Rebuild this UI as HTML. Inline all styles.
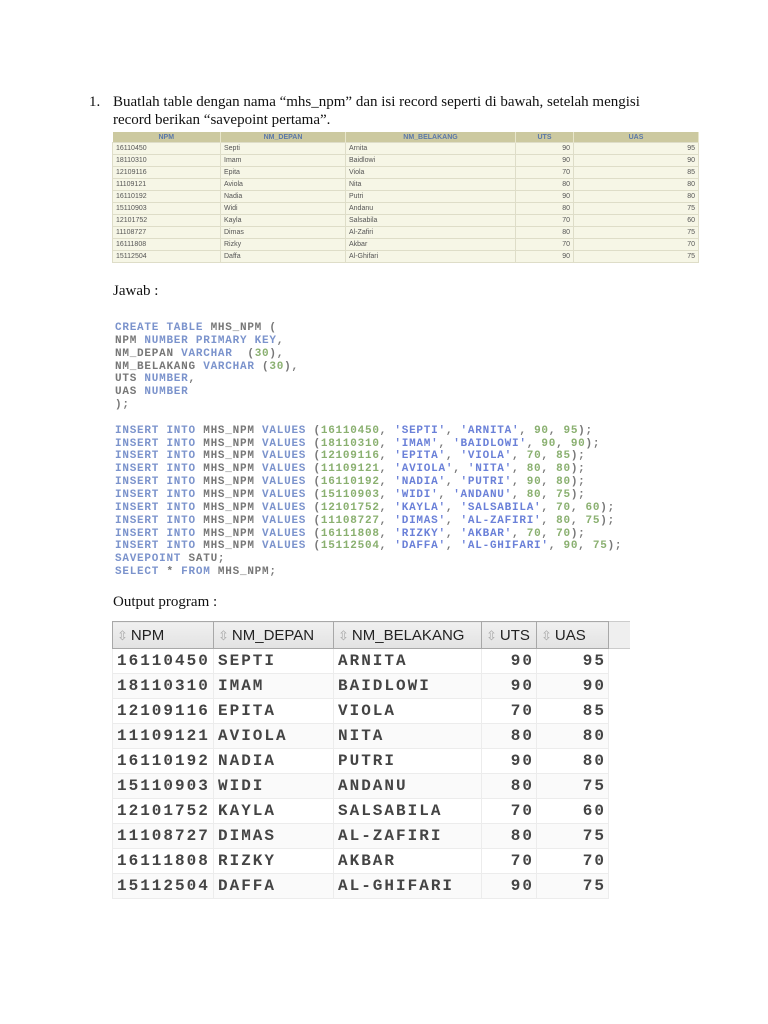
<!DOCTYPE html>
<html><head><meta charset="utf-8"><style>
body{margin:0;width:768px;height:1024px;background:#fff;position:relative;overflow:hidden;font-family:"Liberation Serif",serif;color:#111}
.t{position:absolute;font-size:15px;white-space:nowrap}
#t1{position:absolute;left:112px;top:132px;width:586px;border-collapse:collapse;font-family:"Liberation Sans",sans-serif;font-size:7px;color:#555;table-layout:fixed}
#t1 th{background:#ccc9a0;color:#5a78a8;height:10px;padding:0;font-weight:bold;border-right:1px solid #e8e6cc}
#t1 td{background:#f6f6e6;height:11px;padding:0 3px;border:1px solid #deddc8;line-height:10px}
#t1 td.r{text-align:right}
.code{position:absolute;left:115px;top:322px;font-family:"Liberation Mono",monospace;font-size:11px;letter-spacing:0.75px;line-height:12.85px;font-weight:bold;white-space:pre;color:#777}
.k{color:#7b93cc}.n{color:#8ab070}.s{color:#6a80d8}
#t2{position:absolute;left:112px;top:621px;border-collapse:collapse;table-layout:fixed}
#t2 th{height:26px;background:linear-gradient(#f0f0f0,#e2e2e2);border:1px solid #a8a8a8;font-family:"Liberation Sans",sans-serif;font-weight:normal;font-size:15px;color:#222;text-align:left;padding:0 4px;white-space:nowrap}
#t2 th span{color:#aaa;font-size:13px;margin-right:3px}
#t2 td{height:24px;border:1px solid #ececec;font-family:"Liberation Mono",monospace;font-size:16px;letter-spacing:2px;font-weight:bold;color:#444;padding:0 2px 0 4px;white-space:nowrap;overflow:hidden}
#t2 td.r{text-align:right}
#t2 tr.g td{background:#fafafa}
</style></head><body>
<div class="t" style="left:89px;top:94px">1.</div>
<div class="t" style="left:113px;top:94px">Buatlah table dengan nama “mhs_npm” dan isi record seperti di bawah, setelah mengisi</div>
<div class="t" style="left:113px;top:112px">record berikan “savepoint pertama”.</div>

<table id="t1">
<colgroup><col style="width:108px"><col style="width:125px"><col style="width:170px"><col style="width:58px"><col style="width:125px"></colgroup>
<tr><th>NPM</th><th>NM_DEPAN</th><th>NM_BELAKANG</th><th>UTS</th><th>UAS</th></tr>
<tr><td>16110450</td><td>Septi</td><td>Arnita</td><td class="r">90</td><td class="r">95</td></tr>
<tr><td>18110310</td><td>Imam</td><td>Baidlowi</td><td class="r">90</td><td class="r">90</td></tr>
<tr><td>12109116</td><td>Epita</td><td>Viola</td><td class="r">70</td><td class="r">85</td></tr>
<tr><td>11109121</td><td>Aviola</td><td>Nita</td><td class="r">80</td><td class="r">80</td></tr>
<tr><td>16110192</td><td>Nadia</td><td>Putri</td><td class="r">90</td><td class="r">80</td></tr>
<tr><td>15110903</td><td>Widi</td><td>Andanu</td><td class="r">80</td><td class="r">75</td></tr>
<tr><td>12101752</td><td>Kayla</td><td>Salsabila</td><td class="r">70</td><td class="r">60</td></tr>
<tr><td>11108727</td><td>Dimas</td><td>Al-Zafiri</td><td class="r">80</td><td class="r">75</td></tr>
<tr><td>16111808</td><td>Rizky</td><td>Akbar</td><td class="r">70</td><td class="r">70</td></tr>
<tr><td>15112504</td><td>Daffa</td><td>Al-Ghifari</td><td class="r">90</td><td class="r">75</td></tr>
</table>

<div class="t" style="left:113px;top:283px">Jawab :</div>

<div class="code"><span class="k">CREATE TABLE</span> MHS_NPM (
NPM <span class="k">NUMBER PRIMARY KEY</span>,
NM_DEPAN <span class="k">VARCHAR</span>  (<span class="n">30</span>),
NM_BELAKANG <span class="k">VARCHAR</span> (<span class="n">30</span>),
UTS <span class="k">NUMBER</span>,
UAS <span class="k">NUMBER</span>
);

<span class="k">INSERT INTO</span> MHS_NPM <span class="k">VALUES</span> (<span class="n">16110450</span>, <span class="s">'SEPTI'</span>, <span class="s">'ARNITA'</span>, <span class="n">90</span>, <span class="n">95</span>);
<span class="k">INSERT INTO</span> MHS_NPM <span class="k">VALUES</span> (<span class="n">18110310</span>, <span class="s">'IMAM'</span>, <span class="s">'BAIDLOWI'</span>, <span class="n">90</span>, <span class="n">90</span>);
<span class="k">INSERT INTO</span> MHS_NPM <span class="k">VALUES</span> (<span class="n">12109116</span>, <span class="s">'EPITA'</span>, <span class="s">'VIOLA'</span>, <span class="n">70</span>, <span class="n">85</span>);
<span class="k">INSERT INTO</span> MHS_NPM <span class="k">VALUES</span> (<span class="n">11109121</span>, <span class="s">'AVIOLA'</span>, <span class="s">'NITA'</span>, <span class="n">80</span>, <span class="n">80</span>);
<span class="k">INSERT INTO</span> MHS_NPM <span class="k">VALUES</span> (<span class="n">16110192</span>, <span class="s">'NADIA'</span>, <span class="s">'PUTRI'</span>, <span class="n">90</span>, <span class="n">80</span>);
<span class="k">INSERT INTO</span> MHS_NPM <span class="k">VALUES</span> (<span class="n">15110903</span>, <span class="s">'WIDI'</span>, <span class="s">'ANDANU'</span>, <span class="n">80</span>, <span class="n">75</span>);
<span class="k">INSERT INTO</span> MHS_NPM <span class="k">VALUES</span> (<span class="n">12101752</span>, <span class="s">'KAYLA'</span>, <span class="s">'SALSABILA'</span>, <span class="n">70</span>, <span class="n">60</span>);
<span class="k">INSERT INTO</span> MHS_NPM <span class="k">VALUES</span> (<span class="n">11108727</span>, <span class="s">'DIMAS'</span>, <span class="s">'AL-ZAFIRI'</span>, <span class="n">80</span>, <span class="n">75</span>);
<span class="k">INSERT INTO</span> MHS_NPM <span class="k">VALUES</span> (<span class="n">16111808</span>, <span class="s">'RIZKY'</span>, <span class="s">'AKBAR'</span>, <span class="n">70</span>, <span class="n">70</span>);
<span class="k">INSERT INTO</span> MHS_NPM <span class="k">VALUES</span> (<span class="n">15112504</span>, <span class="s">'DAFFA'</span>, <span class="s">'AL-GHIFARI'</span>, <span class="n">90</span>, <span class="n">75</span>);
<span class="k">SAVEPOINT</span> SATU;
<span class="k">SELECT</span> * <span class="k">FROM</span> MHS_NPM;</div>

<div class="t" style="left:113px;top:594px">Output program :</div>

<div style="position:absolute;left:608px;top:621px;width:22px;height:26px;background:#efefef;border-top:1px solid #ccc;border-bottom:1px solid #ccc"></div>
<table id="t2">
<colgroup><col style="width:101px"><col style="width:120px"><col style="width:148px"><col style="width:55px"><col style="width:72px"></colgroup>
<tr><th><span>⇳</span>NPM</th><th><span>⇳</span>NM_DEPAN</th><th><span>⇳</span>NM_BELAKANG</th><th><span>⇳</span>UTS</th><th><span>⇳</span>UAS</th></tr>
<tr><td>16110450</td><td>SEPTI</td><td>ARNITA</td><td class="r">90</td><td class="r">95</td></tr>
<tr class="g"><td>18110310</td><td>IMAM</td><td>BAIDLOWI</td><td class="r">90</td><td class="r">90</td></tr>
<tr><td>12109116</td><td>EPITA</td><td>VIOLA</td><td class="r">70</td><td class="r">85</td></tr>
<tr class="g"><td>11109121</td><td>AVIOLA</td><td>NITA</td><td class="r">80</td><td class="r">80</td></tr>
<tr><td>16110192</td><td>NADIA</td><td>PUTRI</td><td class="r">90</td><td class="r">80</td></tr>
<tr class="g"><td>15110903</td><td>WIDI</td><td>ANDANU</td><td class="r">80</td><td class="r">75</td></tr>
<tr><td>12101752</td><td>KAYLA</td><td>SALSABILA</td><td class="r">70</td><td class="r">60</td></tr>
<tr class="g"><td>11108727</td><td>DIMAS</td><td>AL-ZAFIRI</td><td class="r">80</td><td class="r">75</td></tr>
<tr><td>16111808</td><td>RIZKY</td><td>AKBAR</td><td class="r">70</td><td class="r">70</td></tr>
<tr class="g"><td>15112504</td><td>DAFFA</td><td>AL-GHIFARI</td><td class="r">90</td><td class="r">75</td></tr>
</table>
</body></html>
